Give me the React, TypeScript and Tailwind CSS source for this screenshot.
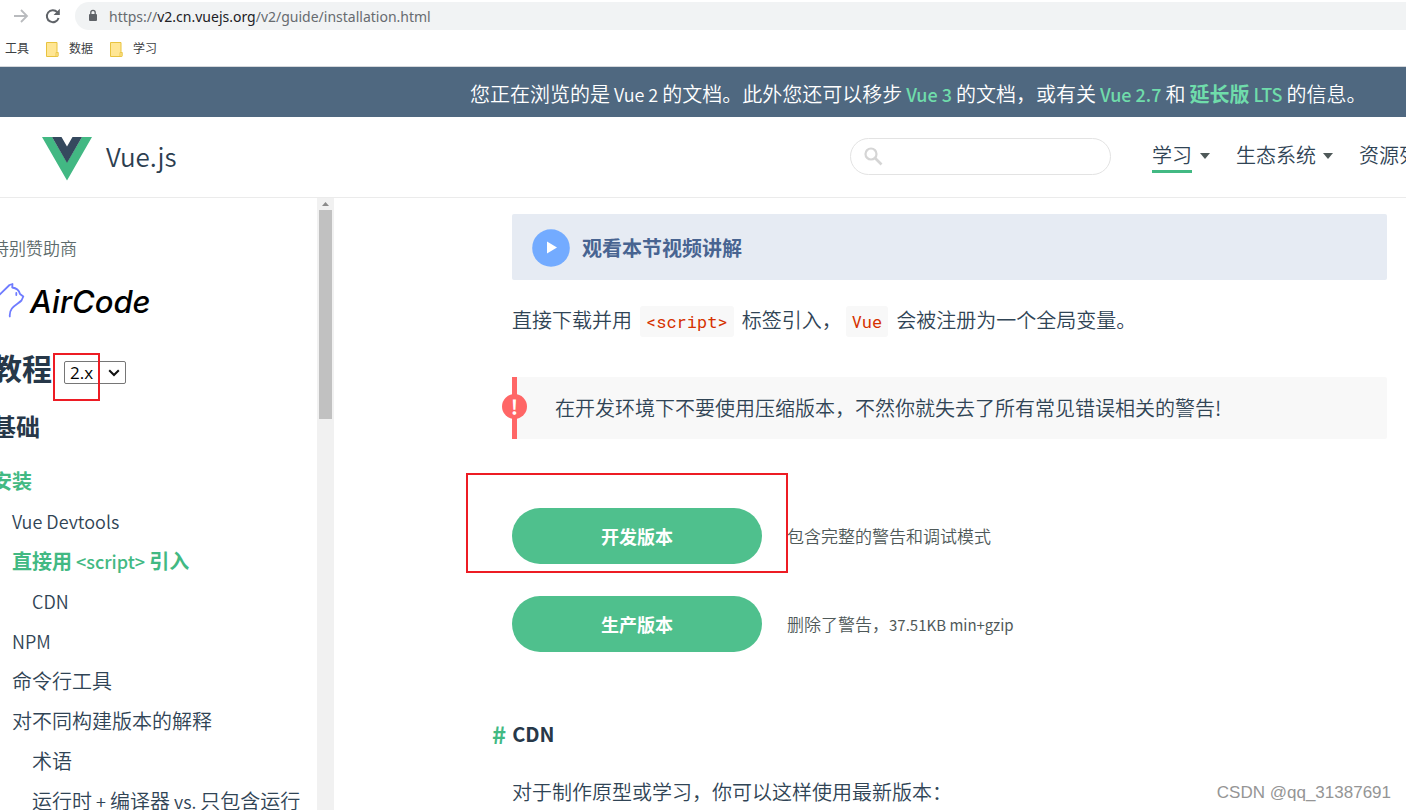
import type { ReactNode } from "react";

/* Latin runs are set a step smaller than the Chinese text around them. */
function Latin({ children, className = "text-[18px]" }: { children: ReactNode; className?: string }) {
  return <span className={className}>{children}</span>;
}

/* A word space at the size of the Latin runs. */
function Gap() {
  return <span className="text-[18px]"> </span>;
}

const strongLatin = "text-[18px] font-medium";

function FolderIcon() {
  return (
    <svg width="13" height="15" viewBox="0 0 13 15" aria-hidden="true">
      <path d="M.5.5h10.500v9l1 1v3l-1 1H.5z" fill="#ffe694" stroke="#e8c33f" />
      <path d="M10 14.500v-4h2v4z" fill="#ffe694" stroke="#e8c33f" strokeWidth=".8" />
    </svg>
  );
}

function BrowserBar() {
  return (
    <div className="shrink-0 border-b border-[#d5d8dc] bg-white font-['Noto_Sans','Noto_Sans_CJK_SC',sans-serif] font-normal">
      <div className="flex h-8 items-center">
        <button aria-label="前进" className="ml-3 flex w-[18px] justify-center">
          <svg width="16" height="14" viewBox="0 0 16 14" fill="none" stroke="#b9bbbe" strokeWidth="1.800">
            <path d="M1 7h13M8 1l6 6-6 6" />
          </svg>
        </button>
        <button aria-label="重新加载" className="ml-[15px] flex w-4 justify-center">
          <svg width="16" height="16" viewBox="0 0 16 16">
            <path d="M13.600 10A6 6 0 1 1 12.300 4.100" fill="none" stroke="#5f6368" strokeWidth="2" />
            <path d="M14.800.8v6.200H8.600z" fill="#5f6368" />
          </svg>
        </button>
        <div className="ml-[14px] flex h-7 flex-1 items-center rounded-l-full bg-[#f1f3f4] pl-3">
          <svg width="12" height="14" viewBox="0 0 12 14" aria-hidden="true">
            <rect x="2" y="5" width="8" height="7" rx="1" fill="#5f6368" />
            <path d="M3.800 6V3.500a2.200 2.200 0 0 1 4.400 0V6" fill="none" stroke="#5f6368" strokeWidth="1.300" />
          </svg>
          <span className="ml-[10px] text-[14px] whitespace-nowrap text-[#676b70]">
            https://<span className="text-[#202124]">v2.cn.vuejs.org</span>/v2/guide/installation.html
          </span>
        </div>
      </div>
      <div className="flex h-[34px] items-center gap-[17px] pl-[5px] text-[12px] text-[#3c4043]">
        <a href="#tools">工具</a>
        <a href="#data" className="flex items-center gap-[10px]"><FolderIcon />数据</a>
        <a href="#study" className="flex items-center gap-[10px]"><FolderIcon />学习</a>
      </div>
    </div>
  );
}

function Banner() {
  const link = "font-bold text-[#6fdcab]";
  return (
    <div className="flex h-[50px] shrink-0 items-center overflow-hidden bg-[#4f6880] pt-[3px] pl-[470px] text-[20px] whitespace-nowrap text-white">
      <p>
        您正在浏览的是<Latin> Vue 2 </Latin>的文档。此外您还可以移步<Gap />
        <a href="#vue3" className={link}><Latin className={strongLatin}>Vue 3</Latin></a><Gap />的文档，或有关<Gap />
        <a href="#vue27" className={link}><Latin className={strongLatin}>Vue 2.7</Latin></a><Gap />和<Gap />
        <a href="#lts" className={link}>延长版<Latin className={strongLatin}> LTS</Latin></a><Gap />的信息。
      </p>
    </div>
  );
}

function Caret() {
  return (
    <svg width="10" height="6" viewBox="0 0 10 6" aria-hidden="true">
      <path d="M0 0h10L5 6z" fill="#4f5959" />
    </svg>
  );
}

function Header() {
  return (
    <header className="flex h-[81px] shrink-0 items-center overflow-hidden border-b border-[#ebebeb] bg-white">
      <a href="#home" className="ml-[42px] flex shrink-0 items-center gap-[14px]">
        <svg width="50" height="48" viewBox="0 -4 50 48" aria-hidden="true">
          <path d="M0 0h10l15 25.500L40 0h10L25 43.500z" fill="#42b883" />
          <path d="M10 0h9.500L25 9.500 30.500 0H40L25 26z" fill="#35495e" />
        </svg>
        <span className="pb-1 text-[26px] font-[350] text-[#2c3e50]">Vue.js</span>
      </a>
      <div className="mr-[-33px] ml-auto flex shrink-0 items-center pb-[2px]">
        <label className="mr-[41px] flex h-[37px] w-[261px] items-center rounded-full border border-[#e3e3e3] pl-[13px]">
          <svg width="19" height="19" viewBox="0 0 19 19" fill="none" stroke="#d5d5d5" strokeWidth="2.200">
            <circle cx="7" cy="7" r="5.500" />
            <path d="M11 11l6.500 6.500" strokeWidth="2.600" />
          </svg>
          <input aria-label="搜索" className="min-w-0 flex-1 bg-transparent px-2 text-[16px] outline-none" />
        </label>
        <nav className="flex items-center gap-[26px] text-[20px] leading-[30px] text-[#304455]">
          <a href="#learn" className="flex items-center gap-2">
            <span className="border-b-[3px] border-[#42b983]">学习</span>
            <Caret />
          </a>
          <a href="#ecosystem" className="flex items-center gap-[7px]">
            <span className="border-b-[3px] border-transparent">生态系统</span>
            <Caret />
          </a>
          <a href="#resources" className="border-b-[3px] border-transparent">资源列表</a>
        </nav>
      </div>
    </header>
  );
}

function Sidebar() {
  const active = "font-bold text-[#42b983]";
  return (
    <aside className="flex w-[334px] shrink-0 overflow-hidden">
      <div className="-ml-2 min-w-0 flex-1 overflow-hidden pt-[37px] whitespace-nowrap">
        <p className="text-[17px] leading-[26px] text-[#5d6b6b]">特别赞助商</p>
        <a href="#aircode" className="mt-[21px] flex h-10 items-center">
          <svg width="33" height="40" viewBox="0 1 33 40" fill="none" stroke="#6f7cff" strokeWidth="1.800" strokeLinejoin="round" strokeLinecap="round">
            <path d="M3 18L17.500 4 20.500 3 20.200 6.500C24 7 27 9 28 13L31.300 15.500 29.500 19.500C25 24 17 26 17.800 35.500" />
            <path d="M24.300 12v2" />
          </svg>
          <span className="ml-[5px] font-['Inter',sans-serif] text-[31px] font-medium text-black italic">AirCode</span>
        </a>
        <h2 className="mt-[22px] flex h-[46px] items-center text-[30px] font-bold text-[#273849]">
          <span>教程</span>
          <span className="relative mt-[11px] ml-3 flex">
            <select
              aria-label="版本"
              className="h-[23px] w-[62px] appearance-none rounded-[2px] border border-[#767676] bg-white pl-[5px] font-['Open_Sans',sans-serif] text-[17px] leading-[21px] font-normal text-black"
            >
              <option>2.x</option>
            </select>
            <svg width="12" height="8" viewBox="0 0 12 8" className="pointer-events-none absolute top-2 right-[6px]" aria-hidden="true">
              <path d="M1.200 1.200L6 6l4.800-4.800" fill="none" stroke="#111" strokeWidth="2" />
            </svg>
            <span className="pointer-events-none absolute top-[-8px] left-[-11px] h-12 w-[47px] border-2 border-[#ed1c24]" />
          </span>
        </h2>
        <h3 className="mt-[18px] text-[24px] leading-[36px] font-bold text-[#273849]">基础</h3>
        <ul className="mt-[17px] text-[20px] leading-[40px] text-[#304455]">
          <li><a href="#install" className={active}>安装</a></li>
          <li className="pl-5"><a href="#devtools"><Latin>Vue Devtools</Latin></a></li>
          <li className="pl-5"><a href="#script" className={active}>直接用<Latin className={strongLatin}> &lt;script&gt; </Latin>引入</a></li>
          <li className="pl-10"><a href="#cdn"><Latin>CDN</Latin></a></li>
          <li className="pl-5"><a href="#npm"><Latin>NPM</Latin></a></li>
          <li className="pl-5"><a href="#cli">命令行工具</a></li>
          <li className="pl-5"><a href="#builds">对不同构建版本的解释</a></li>
          <li className="pl-10"><a href="#terms">术语</a></li>
          <li className="pl-10"><a href="#runtime">运行时<Latin> + </Latin>编译器<Latin> vs. </Latin>只包含运行</a></li>
        </ul>
      </div>
      <div className="w-[17px] shrink-0 bg-[#f1f1f1] px-[2px]">
        <div className="flex h-3 items-center justify-center">
          <svg width="7" height="4" viewBox="0 0 7 4" aria-hidden="true"><path d="M0 4L3.500 0 7 4z" fill="#8b8b8b" /></svg>
        </div>
        <div className="h-[209px] w-[13px] bg-[#c1c1c1]" />
      </div>
    </aside>
  );
}

function Code({ children }: { children: ReactNode }) {
  return (
    <code className="mx-1 inline-block rounded-[3px] bg-[#f8f8f8] px-[6px] font-['Roboto_Mono','Liberation_Mono',monospace] text-[17px] leading-[31px] font-normal text-[#d63200]">
      {children}
    </code>
  );
}

function Download({ label, note, marked }: { label: string; note: ReactNode; marked?: boolean }) {
  return (
    <div className="flex items-center gap-[25px]">
      <span className="relative flex">
        <a
          href="#download"
          className="flex h-14 w-[250px] items-center justify-center rounded-full bg-[#4fc08d] text-[18px] font-bold text-white"
        >
          {label}
        </a>
        {marked && (
          <span className="pointer-events-none absolute top-[-35px] left-[-46px] h-[100px] w-[322px] border-2 border-[#ed1c24]" />
        )}
      </span>
      <span className="text-[17px] whitespace-nowrap text-[#4f5959]">{note}</span>
    </div>
  );
}

function Content() {
  return (
    <main className="min-w-0 flex-1 overflow-hidden pt-4 pr-[19px] pl-[178px] text-[20px] leading-[32px] text-[#304455]">
      <a href="#video" className="flex h-[66px] items-center gap-3 rounded-[2px] bg-[#e6ebf3] pt-px pl-5 font-bold text-[#486491]">
        <svg width="38" height="38" viewBox="0 0 38 38" aria-hidden="true">
          <circle cx="19" cy="19" r="18.800" fill="#73abff" />
          <path d="M15 12.500v12L25 18.500z" fill="#fff" />
        </svg>
        <span>观看本节视频讲解</span>
      </a>
      <p className="mt-6">
        直接下载并用<Gap /><Code>&lt;script&gt;</Code><Gap />标签引入，<Code>Vue</Code><Gap />会被注册为一个全局变量。
      </p>
      <div className="relative mt-10 flex h-[62px] items-center rounded-r-[2px] border-l-[5px] border-[#ff6666] bg-[#f8f8f8] pl-[38px]">
        <span className="absolute top-[17px] left-[-15px] flex size-[25px] items-center justify-center rounded-full bg-[#ff6666] text-[20px] font-bold text-white">
          !
        </span>
        在开发环境下不要使用压缩版本，不然你就失去了所有常见错误相关的警告!
      </div>
      <div className="mt-[69px] flex flex-col gap-8">
        <Download label="开发版本" note="包含完整的警告和调试模式" marked />
        <Download label="生产版本" note={<>删除了警告，<Latin className="text-[15px] font-normal">37.51KB min+gzip</Latin></>} />
      </div>
      <h3 className="mt-[66px] -ml-5 flex items-center gap-[6px] text-[20px] font-bold text-[#273849]">
        <a href="#cdn" className="text-[24px] leading-[30px] text-[#42b983]">#</a>
        CDN
      </h3>
      <p className="mt-[26px]">对于制作原型或学习，你可以这样使用最新版本：</p>
    </main>
  );
}

export default function App() {
  return (
    <div className="relative flex h-screen flex-col overflow-hidden bg-white font-['Noto_Sans_CJK_SC',sans-serif] font-[350]">
      <BrowserBar />
      <Banner />
      <Header />
      <div className="flex min-h-0 flex-1">
        <Sidebar />
        <Content />
      </div>
      <span className="absolute right-[15px] bottom-[6px] font-['Liberation_Sans',sans-serif] text-[17px] leading-[22px] text-[#959595]">
        CSDN @qq_31387691
      </span>
    </div>
  );
}
